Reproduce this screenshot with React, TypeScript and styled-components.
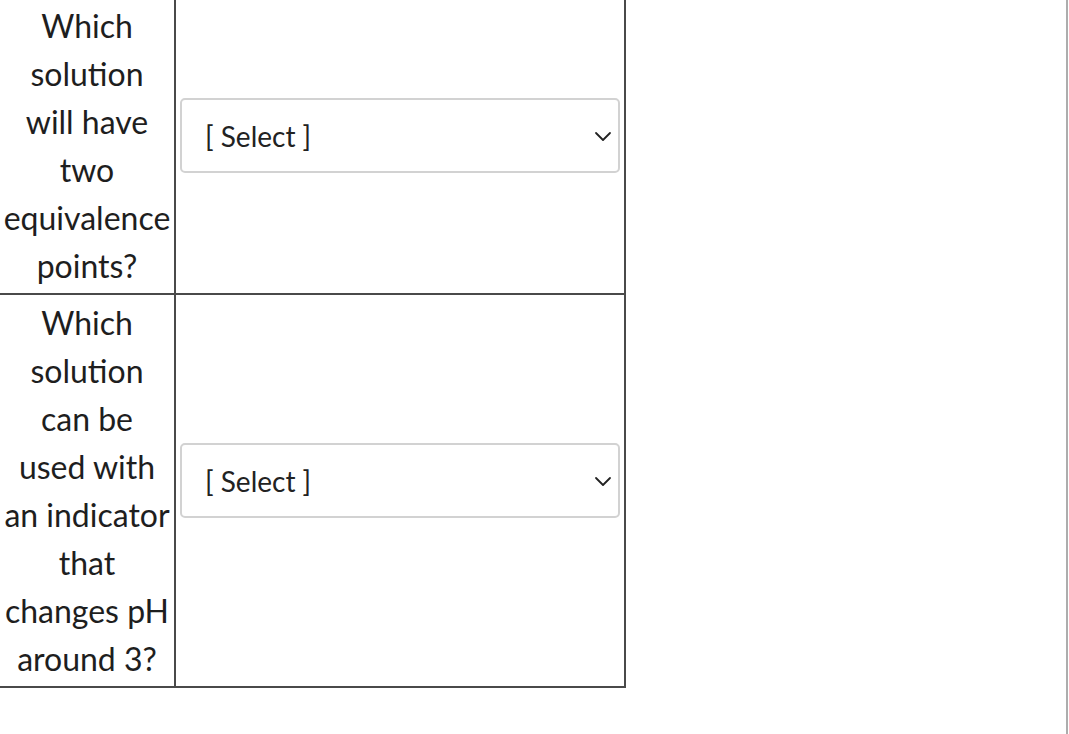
import React from "react";
import styled, { createGlobalStyle } from "styled-components";

const Global = createGlobalStyle`
  html, body { margin: 0; padding: 0; background: #fff; }
  body { font-family: Lato, "Open Sans", sans-serif; color: #1e1e1e; }
`;

const Page = styled.div`
  width: 1066px;
  height: 734px;
  border-right: 2px solid #adadad;
  overflow: hidden;
`;

const Table = styled.table`
  border-collapse: separate;
  border-spacing: 0;
  margin-top: -2px;
  margin-left: -2px;
  table-layout: fixed;
`;

const Row = styled.tr``;

const Question = styled.td<{ $first?: boolean }>`
  box-sizing: border-box;
  width: 178px;
  border-left: 2px solid #4a4a4a;
  border-right: 2px solid #4a4a4a;
  border-top: ${(p) => (p.$first ? "2px solid #4a4a4a" : "0")};
  border-bottom: 2px solid #4a4a4a;
  padding: ${(p) => (p.$first ? "2px" : "4px")} 0 3px 0;
  text-align: center;
  vertical-align: top;
  font-size: 32px;
  line-height: 48px;
  white-space: nowrap;
`;

const AnswerCell = styled.td<{ $first?: boolean }>`
  box-sizing: border-box;
  width: 450px;
  border-right: 2px solid #4a4a4a;
  border-top: ${(p) => (p.$first ? "2px solid #4a4a4a" : "0")};
  border-bottom: 2px solid #4a4a4a;
  padding: 0 4px ${(p) => (p.$first ? "22px" : "20px")} 4px;
  vertical-align: middle;
`;

const SelectBox = styled.div`
  box-sizing: border-box;
  height: 75px;
  border: 2px solid #d2d2d2;
  border-radius: 5px;
  display: flex;
  align-items: center;
  justify-content: space-between;
  padding: 0 6px 0 23px;
  font-size: 28px;
  color: #222;
`;

const Chevron = () => (
  <svg width="18" height="12" viewBox="0 0 18 12" fill="none">
    <path d="M2 3l7 7 7-7" stroke="#222" strokeWidth="1.8" strokeLinecap="round" strokeLinejoin="round" />
  </svg>
);

const rows = [
  ["Which", "solution", "will have", "two", "equivalence", "points?"],
  ["Which", "solution", "can be", "used with", "an indicator", "that", "changes pH", "around 3?"],
];

export default function App() {
  return (
    <>
      <Global />
      <Page>
        <Table>
          <tbody>
            {rows.map((lines, i) => (
              <Row key={i}>
                <Question $first={i === 0}>
                  {lines.map((l, j) => (
                    <div key={j}>{l}</div>
                  ))}
                </Question>
                <AnswerCell $first={i === 0}>
                  <SelectBox>
                    <span>[ Select ]</span>
                    <Chevron />
                  </SelectBox>
                </AnswerCell>
              </Row>
            ))}
          </tbody>
        </Table>
      </Page>
    </>
  );
}
